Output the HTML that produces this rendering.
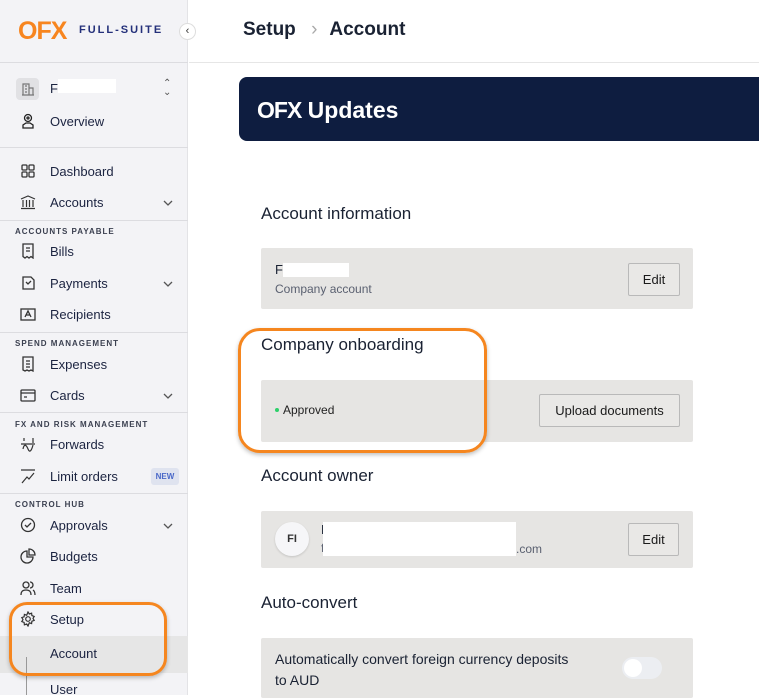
<!DOCTYPE html>
<html><head><meta charset="utf-8"><style>
*{box-sizing:border-box;margin:0;padding:0}
body{width:759px;height:695px;overflow:hidden;position:relative;font-family:"Liberation Sans",sans-serif;background:#fff;color:#1a2233}
.a{position:absolute}
#sb{left:0;top:0;width:188px;height:695px;background:#f3f3f6;border-right:1px solid #e3e3e6}
.sep{position:absolute;left:0;width:188px;height:1px;background:#dcdce0}
.it{position:absolute;left:50px;font-size:13px;color:#1b2340;line-height:16px}
.ic{position:absolute;left:20px;width:16px;height:16px}
.cap{position:absolute;left:15px;font-size:8px;letter-spacing:1px;color:#3b4050;font-weight:bold}
.chev{position:absolute;left:163px;width:10px;height:6px}
.h{position:absolute;left:261px;font-size:17px;color:#1a2233}
.card{position:absolute;left:261px;width:432px;background:#e6e5e3;border-radius:2px}
.btn{position:absolute;border:1px solid #b9b9b9;border-radius:2px;background:#e9e8e6;font-size:13px;color:#1a1a1a;text-align:center}
</style></head><body>
<div id="sb" class="a"></div>
<div class="a" style="left:18px;top:18px;font-size:25px;font-weight:bold;color:#f7851f;letter-spacing:-1px;line-height:26px">OFX</div>
<div class="a" style="left:79px;top:24px;font-size:11px;font-weight:bold;color:#24307a;letter-spacing:2px">FULL-SUITE</div>
<div class="a" style="left:179px;top:23px;width:17px;height:17px;border-radius:50%;background:#fff;border:1px solid #ddd;font-size:11px;line-height:15px;text-align:center;color:#333">‹</div>
<div class="sep" style="top:62px"></div>
<div class="a" style="left:16px;top:78px;width:23px;height:22px;border-radius:4px;background:#e1e1e4"></div>
<svg class="ic" style="top:81px;left:20px" viewBox="0 0 16 16" fill="none" stroke="#777" stroke-width="1.2"><path d="M3 14V3h6v11M9 7h4v7M2 14h12M5 5h2M5 8h2M5 11h2"/></svg>
<div class="it" style="top:81px">F</div><div class="a" style="left:58px;top:79px;width:58px;height:14px;background:#fff"></div>
<div class="a" style="left:163px;top:79px;font-size:10px;color:#555;line-height:9px">⌃<br>⌄</div>
<svg class="ic" style="top:113px" viewBox="0 0 16 16" fill="none" stroke="#222" stroke-width="1.3"><circle cx="8" cy="5" r="3.5"/><circle cx="8" cy="5" r="1"/><path d="M3 15v-3l3-2h4l3 2v3z"/></svg>
<div class="it" style="top:114px">Overview</div>
<div class="sep" style="top:147px"></div>
<svg class="ic" style="top:163px" viewBox="0 0 16 16" fill="none" stroke="#333" stroke-width="1.3"><rect x="2" y="2" width="5" height="5" rx="1"/><rect x="9" y="2" width="5" height="5" rx="1"/><rect x="2" y="9" width="5" height="5" rx="1"/><rect x="9" y="9" width="5" height="5" rx="1"/></svg>
<div class="it" style="top:164px">Dashboard</div>
<svg class="ic" style="top:194px" viewBox="0 0 16 16" fill="none" stroke="#333" stroke-width="1.2"><path d="M1 5l7-3 7 3M3 6v7M6.5 6v7M9.5 6v7M13 6v7M1 14.5h14"/></svg>
<div class="it" style="top:195px">Accounts</div>
<svg class="chev" style="top:200px" viewBox="0 0 10 6" fill="none" stroke="#555" stroke-width="1.3"><path d="M1 1l4 4 4-4"/></svg>
<div class="sep" style="top:220px"></div>
<div class="cap" style="top:227px">ACCOUNTS PAYABLE</div>
<svg class="ic" style="top:243px" viewBox="0 0 16 16" fill="none" stroke="#333" stroke-width="1.3"><path d="M3 1h10v14l-2-1.5-2 1.5-2-1.5-2 1.5-2-1.5z M6 5h4M6 8h4"/></svg>
<div class="it" style="top:244px">Bills</div>
<svg class="ic" style="top:275px" viewBox="0 0 16 16" fill="none" stroke="#333" stroke-width="1.3"><path d="M3 2h8l3 3v9H3zM6 7l2 2 3-3"/></svg>
<div class="it" style="top:276px">Payments</div>
<svg class="chev" style="top:281px" viewBox="0 0 10 6" fill="none" stroke="#555" stroke-width="1.3"><path d="M1 1l4 4 4-4"/></svg>
<svg class="ic" style="top:306px" viewBox="0 0 16 16" fill="none" stroke="#333" stroke-width="1.3"><rect x="1" y="3" width="14" height="11"/><path d="M5 11l3-6 3 6M6 9h4"/></svg>
<div class="it" style="top:307px">Recipients</div>
<div class="sep" style="top:332px"></div>
<div class="cap" style="top:339px">SPEND MANAGEMENT</div>
<svg class="ic" style="top:356px" viewBox="0 0 16 16" fill="none" stroke="#333" stroke-width="1.3"><path d="M3 1h10v14l-2-1-2 1-2-1-2 1-2-1zM6 5h4M6 8h4M6 11h4"/></svg>
<div class="it" style="top:357px">Expenses</div>
<svg class="ic" style="top:387px" viewBox="0 0 16 16" fill="none" stroke="#333" stroke-width="1.3"><rect x="1" y="3" width="14" height="11" rx="1"/><path d="M1 6h14M4 10h3"/></svg>
<div class="it" style="top:388px">Cards</div>
<svg class="chev" style="top:393px" viewBox="0 0 10 6" fill="none" stroke="#555" stroke-width="1.3"><path d="M1 1l4 4 4-4"/></svg>
<div class="sep" style="top:412px"></div>
<div class="cap" style="top:420px">FX AND RISK MANAGEMENT</div>
<svg class="ic" style="top:436px" viewBox="0 0 16 16" fill="none" stroke="#333" stroke-width="1.2"><path d="M1 8h14M3 13c1-5 3-5 5 0s4 0 5-4M13 2v5M4 2v3"/></svg>
<div class="it" style="top:437px">Forwards</div>
<svg class="ic" style="top:468px" viewBox="0 0 16 16" fill="none" stroke="#333" stroke-width="1.2"><path d="M1 2h14M2 15l5-6 2 2 5-6"/></svg>
<div class="it" style="top:469px">Limit orders</div>
<div class="a" style="left:151px;top:468px;width:28px;height:17px;border-radius:3px;background:#dfe3ef;font-size:8px;font-weight:bold;color:#4a68c8;text-align:center;line-height:17px">NEW</div>
<div class="sep" style="top:493px"></div>
<div class="cap" style="top:500px">CONTROL HUB</div>
<svg class="ic" style="top:517px" viewBox="0 0 16 16" fill="none" stroke="#333" stroke-width="1.3"><circle cx="8" cy="8" r="6.5"/><path d="M5 8l2 2 4-4"/></svg>
<div class="it" style="top:518px">Approvals</div>
<svg class="chev" style="top:523px" viewBox="0 0 10 6" fill="none" stroke="#555" stroke-width="1.3"><path d="M1 1l4 4 4-4"/></svg>
<svg class="ic" style="top:548px" viewBox="0 0 16 16" fill="none" stroke="#333" stroke-width="1.3"><path d="M7 3a6 6 0 1 0 6 6H7z M9 1v6h6a6 6 0 0 0-6-6z"/></svg>
<div class="it" style="top:549px">Budgets</div>
<svg class="ic" style="top:580px" viewBox="0 0 16 16" fill="none" stroke="#333" stroke-width="1.3"><circle cx="6" cy="5" r="3"/><path d="M1 15c0-4 2-5 5-5s5 1 5 5M10 2a3 3 0 0 1 0 6M13 10c1.5 1 2 2.5 2 5"/></svg>
<div class="it" style="top:581px">Team</div>
<svg class="ic" style="top:611px" viewBox="0 0 16 16" fill="none" stroke="#333" stroke-width="1.2"><circle cx="8" cy="8" r="2.3"/><path d="M8 1l1.3 2 2.3-.8.3 2.4 2.3.8-1.2 2 1.2 2-2.3.8-.3 2.4-2.3-.8L8 15l-1.3-2-2.3.8-.3-2.4-2.3-.8 1.2-2-1.2-2 2.3-.8.3-2.4 2.3.8z"/></svg>
<div class="it" style="top:612px">Setup</div>
<div class="a" style="left:0;top:636px;width:188px;height:37px;background:#e6e6e6"></div>
<div class="a" style="left:26px;top:657px;width:1px;height:38px;background:#999"></div>
<div class="it" style="top:646px">Account</div>
<div class="it" style="top:682px">User</div>
<div class="a" style="left:9px;top:602px;width:158px;height:74px;border:3px solid #f5861f;border-radius:18px;box-shadow:0 2px 4px rgba(0,0,0,.25)"></div>

<div class="a" style="left:243px;top:19px;font-size:19px;font-weight:bold;color:#1a2233">Setup <span style="color:#aaa;font-weight:normal;margin:0 12px 0 10px">›</span>Account</div>
<div class="a" style="left:189px;top:62px;width:570px;height:1px;background:#e6e6e6"></div>
<div class="a" style="left:239px;top:77px;width:530px;height:64px;background:#0e1d40;border-radius:8px 0 0 8px"></div>
<div class="a" style="left:257px;top:96px;font-size:23px;font-weight:bold;color:#fff;line-height:28px"><span style="letter-spacing:-1px">OFX</span> Updates</div>

<div class="h" style="top:204px">Account information</div>
<div class="card" style="top:248px;height:61px"></div>
<div class="a" style="left:275px;top:262px;font-size:13px">F</div>
<div class="a" style="left:283px;top:263px;width:66px;height:14px;background:#fff"></div>
<div class="a" style="left:275px;top:282px;font-size:12px;color:#5a6070">Company account</div>
<div class="btn" style="left:628px;top:263px;width:52px;height:33px;line-height:31px">Edit</div>

<div class="h" style="top:335px">Company onboarding</div>
<div class="card" style="top:380px;height:62px"></div>
<div class="a" style="left:275px;top:408px;width:4px;height:4px;border-radius:50%;background:#2dd06a"></div>
<div class="a" style="left:283px;top:403px;font-size:12px;color:#222">Approved</div>
<div class="btn" style="left:539px;top:394px;width:141px;height:33px;line-height:31px">Upload documents</div>
<div class="a" style="left:238px;top:328px;width:249px;height:125px;border:3px solid #f5861f;border-radius:22px;box-shadow:0 2px 4px rgba(0,0,0,.25)"></div>

<div class="h" style="top:466px">Account owner</div>
<div class="card" style="top:511px;height:57px"></div>
<div class="a" style="left:275px;top:522px;width:34px;height:34px;border-radius:50%;background:#f6f6f8;box-shadow:0 1px 2px rgba(0,0,0,.15);font-size:11px;font-weight:bold;text-align:center;line-height:34px;color:#333">FI</div>
<div class="a" style="left:321px;top:522px;font-size:13px">F</div>
<div class="a" style="left:321px;top:541px;font-size:12px;color:#5a6070">f</div>
<div class="a" style="left:323px;top:522px;width:193px;height:34px;background:#fff"></div>
<div class="a" style="left:516px;top:542px;font-size:12px;color:#5a6070">.com</div>
<div class="btn" style="left:628px;top:523px;width:51px;height:33px;line-height:31px">Edit</div>

<div class="h" style="top:593px">Auto-convert</div>
<div class="card" style="top:638px;height:60px"></div>
<div class="a" style="left:275px;top:649px;font-size:14px;line-height:21px;color:#1a2233;white-space:nowrap">Automatically convert foreign currency deposits<br>to AUD</div>
<div class="a" style="left:622px;top:657px;width:40px;height:22px;border-radius:11px;background:#eceef2"></div>
<div class="a" style="left:624px;top:659px;width:18px;height:18px;border-radius:50%;background:#fff"></div>
</body></html>
